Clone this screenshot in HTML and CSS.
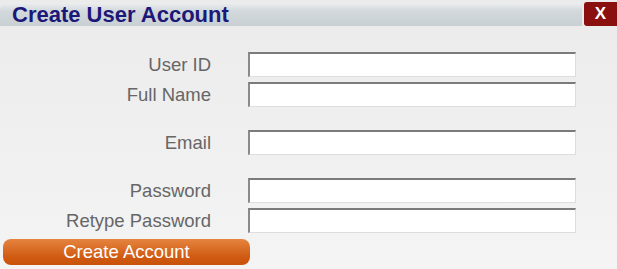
FILE: index.html
```html
<!DOCTYPE html>
<html lang="en">
<head>
    <meta charset="UTF-8">
    <meta name="viewport" content="width=device-width, initial-scale=1.0">
    <title>Create User Account</title>
    <link rel="stylesheet" href="styles.css">
</head>
<body>
    <div class="dialog">
        <div class="dialog-header">
            <div class="title-bar">Create User Account</div>
            <button class="close-button" type="button">X</button>
        </div>
        <form class="account-form" id="create-account">
            <div class="form-group">
                <div class="form-row">
                    <label for="userid">User ID</label>
                    <input type="text" id="userid" name="userid">
                </div>
                <div class="form-row">
                    <label for="fullname">Full Name</label>
                    <input type="text" id="fullname" name="fullname">
                </div>
            </div>
            <div class="form-group">
                <div class="form-row">
                    <label for="email">Email</label>
                    <input type="text" id="email" name="email">
                </div>
            </div>
            <div class="form-group last">
                <div class="form-row">
                    <label for="password">Password</label>
                    <input type="password" id="password" name="password">
                </div>
                <div class="form-row">
                    <label for="retype">Retype Password</label>
                    <input type="password" id="retype" name="retype">
                </div>
            </div>
            <button class="submit-button" type="submit">Create Account</button>
        </form>
    </div>
</body>
</html>
```

FILE: styles.css
```css
html, body {
    margin: 0;
    padding: 0;
}

body {
    width: 617px;
    height: 269px;
    overflow: hidden;
    font-family: "Liberation Sans", Arial, sans-serif;
    background: linear-gradient(#ebebeb, #f4f4f4);
}

.dialog {
    padding-top: 2px;
}

.dialog-header {
    display: flex;
    align-items: flex-end;
    height: 24px;
}

.title-bar {
    flex: 1;
    height: 23px;
    margin-right: 2px;
    padding-left: 12px;
    border-radius: 7px 0 0 0;
    background: linear-gradient(#eceeef 0%, #d2d8db 35%, #c9d0d4 100%);
    color: #1c1878;
    font-size: 22px;
    font-weight: bold;
    line-height: 23px;
}

.close-button {
    width: 33px;
    height: 24px;
    padding: 0;
    border: none;
    border-radius: 3px 0 0 3px;
    background: #8a1010;
    color: #ffffff;
    font-family: "Liberation Sans", Arial, sans-serif;
    font-size: 17px;
    font-weight: bold;
    line-height: 24px;
}

.account-form {
    padding-top: 26px;
}

.form-group {
    margin-bottom: 23px;
}

.form-group.last {
    margin-bottom: 6px;
}

.form-row {
    display: flex;
    align-items: center;
    height: 25px;
    margin-bottom: 5px;
}

.form-row label {
    width: 211px;
    margin-right: 37px;
    text-align: right;
    color: #666666;
    font-size: 18.5px;
}

.form-row input {
    box-sizing: border-box;
    width: 328px;
    height: 25px;
    margin: 0;
    border-style: solid;
    border-width: 2px 1px 1px 2px;
    border-color: #7b7b7b #dddddd #dddddd #8a8a8a;
    background: #ffffff;
}

.submit-button {
    display: block;
    width: 247px;
    height: 26px;
    margin-left: 3px;
    padding: 0;
    border: none;
    border-radius: 8px;
    background: linear-gradient(#e5843f, #d05a12 70%, #c95208);
    color: #ffffff;
    font-family: "Liberation Sans", Arial, sans-serif;
    font-size: 18.5px;
    line-height: 26px;
}
```
